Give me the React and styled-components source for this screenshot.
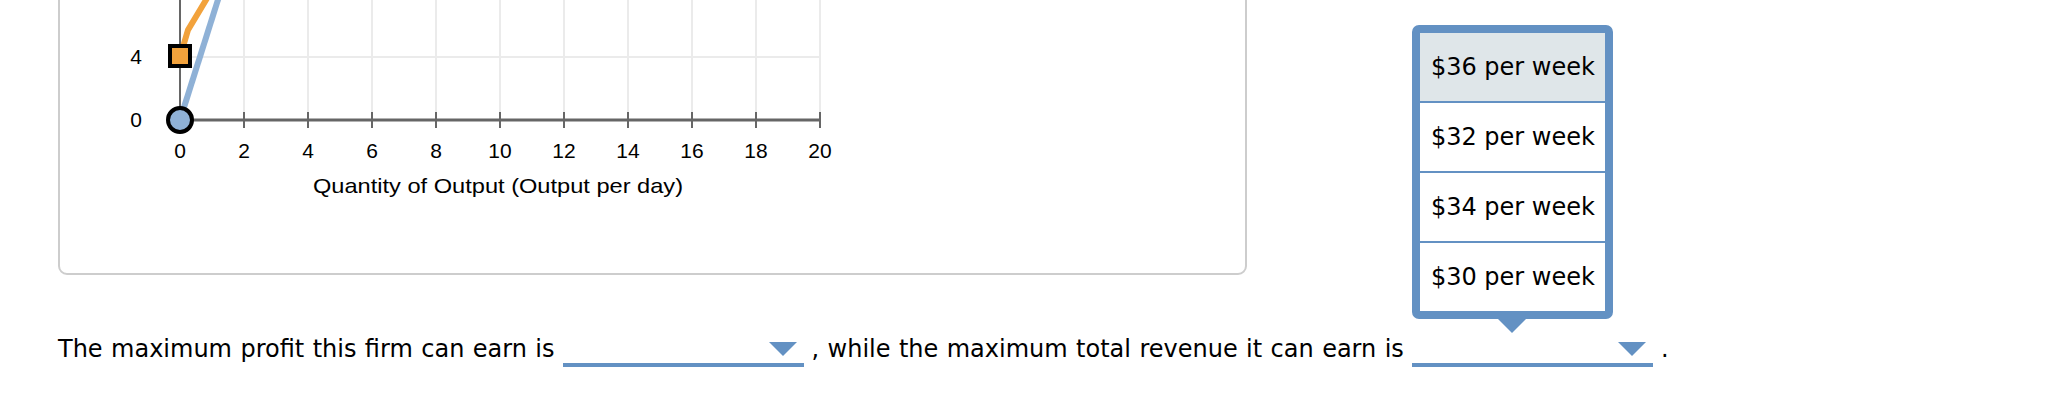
import React from "react";
import styled, { createGlobalStyle } from "styled-components";

const BLUE = "#6391c3";

const GlobalStyle = createGlobalStyle`
  html, body {
    margin: 0;
    padding: 0;
    background: #fff;
  }
  html {
    overflow: hidden;
  }
  body {
    font-family: "DejaVu Sans", Verdana, sans-serif;
    color: #000;
  }
`;

const Page = styled.div`
  display: flow-root;
  padding-left: 58px;
  width: 2065px;
  box-sizing: border-box;
`;

const GraphCard = styled.div`
  margin-top: -200px;
  width: 1189px;
  height: 475px;
  box-sizing: border-box;
  border: 2px solid #cdcdcd;
  border-radius: 9px;
  background: #fff;
  overflow: hidden;
`;

const Sentence = styled.p`
  margin: 56px 0 0;
  font-size: 24px;
  line-height: 36px;
  word-spacing: 0.8px;
  white-space: nowrap;
`;

const Select = styled.span`
  position: relative;
  display: inline-block;
  width: 241px;
  height: 26px;
  margin: 0 8px;
  border-bottom: 4px solid ${BLUE};
  vertical-align: -10px;
  cursor: pointer;

  &::after {
    content: "";
    position: absolute;
    right: 7px;
    top: 5px;
    border-left: 14px solid transparent;
    border-right: 14px solid transparent;
    border-top: 14px solid ${BLUE};
  }
`;

const Menu = styled.ul`
  position: absolute;
  left: 0;
  bottom: calc(100% + 18px);
  width: 201px;
  box-sizing: border-box;
  margin: 0;
  padding: 0;
  list-style: none;
  background: #fff;
  border: 8px solid ${BLUE};
  border-radius: 7px;
  word-spacing: normal;
  z-index: 2;

  &::after {
    content: "";
    position: absolute;
    left: 50%;
    top: calc(100% + 8px);
    transform: translateX(-50%);
    border-left: 14px solid transparent;
    border-right: 14px solid transparent;
    border-top: 14px solid ${BLUE};
  }
`;

const MenuItem = styled.li`
  height: 68px;
  display: flex;
  align-items: center;
  padding-left: 11px;
  font-size: 24px;
  line-height: 1;
  background: ${(p) => (p.$active ? "#dfe6e9" : "#fff")};
  border-bottom: 2px solid ${BLUE};

  &:last-child {
    border-bottom: none;
  }
`;

// page coords: x(v) = 180 + 32v, y(v) = 120 - 15.75v
const xPx = (v) => 180 + 32 * v;
const yPx = (v) => 120 - 15.75 * v;

const AXIS = "#666";
const GRID = "#ebebeb";
const chartFont = '"Liberation Sans", Arial, sans-serif';

// graph labels are drawn slightly stretched, like the original plot
function Label({ x, y, children }) {
  return (
    <g transform={`translate(${x} ${y}) scale(1.05 1)`}>
      <text fontSize="20" textAnchor="middle" fill="#000">
        {children}
      </text>
    </g>
  );
}

function Chart() {
  const xTicks = [2, 4, 6, 8, 10, 12, 14, 16, 18, 20];
  const xLabels = [0, ...xTicks];
  const yGrid = [4, 8, 12, 16, 20];
  return (
    <svg width="1185" height="471" viewBox="0 0 1185 471">
      <g transform="translate(-60, 198)" fontFamily={chartFont}>
        {xTicks.map((v) => (
          <line
            key={`gx${v}`}
            x1={xPx(v)}
            x2={xPx(v)}
            y1={-200}
            y2={120}
            stroke={GRID}
            strokeWidth="2"
          />
        ))}
        {yGrid.map((v) => (
          <line
            key={`gy${v}`}
            x1={180}
            x2={xPx(20)}
            y1={yPx(v)}
            y2={yPx(v)}
            stroke={GRID}
            strokeWidth="2"
          />
        ))}
        <line x1="180" x2="180" y1="-200" y2="120" stroke={AXIS} strokeWidth="2" />
        <line x1="180" x2={xPx(20) + 1} y1="120" y2="120" stroke={AXIS} strokeWidth="3" />
        {xTicks.map((v) => (
          <line
            key={`t${v}`}
            x1={xPx(v)}
            x2={xPx(v)}
            y1="112"
            y2="128"
            stroke={AXIS}
            strokeWidth="2"
          />
        ))}
        {xLabels.map((v) => (
          <Label key={`lx${v}`} x={xPx(v)} y={158}>
            {v}
          </Label>
        ))}
        <Label x={136} y={yPx(4) + 7}>4</Label>
        <Label x={136} y={127}>0</Label>
        <text
          x="498"
          y="193"
          fontSize="21"
          textAnchor="middle"
          textLength="370"
          lengthAdjust="spacingAndGlyphs"
          fill="#000"
        >
          Quantity of Output (Output per day)
        </text>

        <polyline
          points="180,57 188,30 206,0 214,-14"
          fill="none"
          stroke="#f2a23c"
          strokeWidth="6"
        />
        <line x1="180" y1="120" x2="228" y2="-32" stroke="#8fb1d6" strokeWidth="6" />

        <rect x="170" y="46" width="20" height="20" fill="#f2a23c" stroke="#000" strokeWidth="4" />
        <circle cx="180" cy="120" r="12" fill="#8fb1d6" stroke="#000" strokeWidth="4" />
      </g>
    </svg>
  );
}

const options = ["$36 per week", "$32 per week", "$34 per week", "$30 per week"];

export default function App() {
  return (
    <>
      <GlobalStyle />
      <Page>
        <GraphCard>
          <Chart />
        </GraphCard>
        <Sentence>
          The maximum profit this firm can earn is
          <Select />
          , while the maximum total revenue it can earn is
          <Select>
            <Menu>
              {options.map((o, i) => (
                <MenuItem key={o} $active={i === 0}>
                  {o}
                </MenuItem>
              ))}
            </Menu>
          </Select>
          .
        </Sentence>
      </Page>
    </>
  );
}
